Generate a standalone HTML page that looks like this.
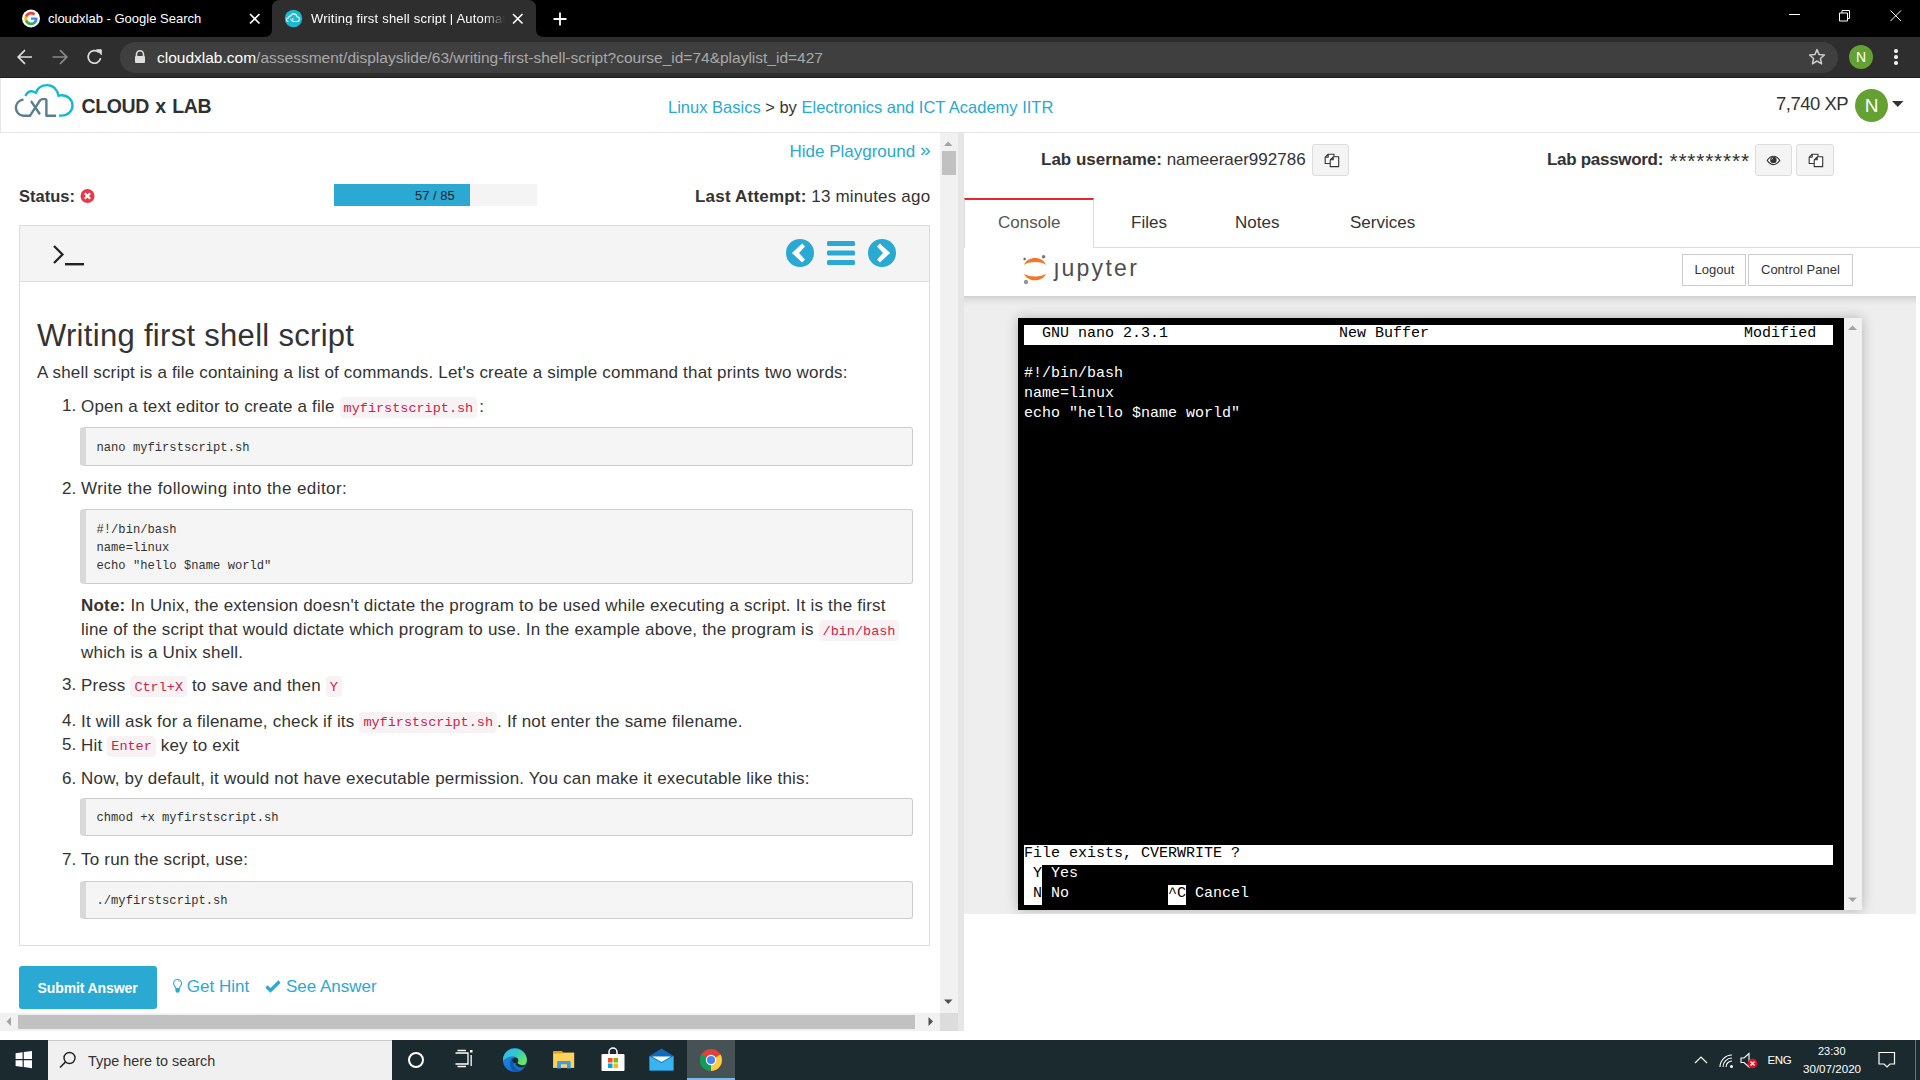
<!DOCTYPE html>
<html><head><meta charset="utf-8">
<style>
*{box-sizing:border-box;margin:0;padding:0}
html,body{width:1920px;height:1080px;overflow:hidden;background:#fff;font-family:"Liberation Sans",sans-serif;color:#333}
.a{position:absolute}
svg{position:absolute;overflow:visible}
.t{position:absolute;white-space:nowrap;line-height:1}
/* chrome */
#tabs{position:absolute;left:0;top:0;width:1920px;height:37px;background:#000}
#toolbar{position:absolute;left:0;top:37px;width:1920px;height:41px;background:#2e2e2e;border-bottom:1px solid #1f1f1f}
#omni{position:absolute;left:120px;top:5px;width:1718px;height:31px;border-radius:16px;background:#3f3f3f}
/* header */
#hdr{position:absolute;left:0;top:78px;width:1920px;height:55px;background:#fff;border-bottom:1px solid #e6e6e6;border-left:1px solid #e6e6e6}
#left{position:absolute;left:0;top:133px;width:940px;height:880px;background:#fff;overflow:hidden}
#right{position:absolute;left:964px;top:133px;width:956px;height:897px;background:#fff;overflow:hidden}
#task{position:absolute;left:0;top:1040px;width:1920px;height:40px;background:#1b2a2f}
</style></head><body>
<!-- TABS -->
<div id="tabs">
  <!-- active tab shape -->
  <svg width="1920" height="37" style="left:0;top:0">
    <path d="M264 37 Q272 37 272 29 L272 8 Q272 0 280 0 L528 0 Q536 0 536 8 L536 29 Q536 37 544 37 Z" fill="#2e2e2e"/>
  </svg>
  <!-- google icon -->
  <svg width="20" height="20" style="left:21px;top:9px" viewBox="0 0 20 20">
    <circle cx="10" cy="9.5" r="9" fill="#fff"/>
    <g transform="translate(3.3 2.8) scale(0.56)">
    <path d="M23.5 12.3c0-.8-.1-1.6-.2-2.3H12v4.4h6.5c-.3 1.5-1.1 2.7-2.4 3.6v3h3.9c2.2-2.1 3.5-5.1 3.5-8.7z" fill="#4285f4"/>
    <path d="M12 24c3.2 0 6-1.1 8-2.9l-3.9-3c-1.1.7-2.5 1.2-4.1 1.2-3.1 0-5.8-2.1-6.7-5H1.3v3.1C3.3 21.3 7.3 24 12 24z" fill="#34a853"/>
    <path d="M5.3 14.3c-.2-.7-.4-1.5-.4-2.3s.1-1.6.4-2.3V6.6H1.3C.5 8.2 0 10.1 0 12s.5 3.8 1.3 5.4z" fill="#fbbc05"/>
    <path d="M12 4.8c1.8 0 3.4.6 4.6 1.8l3.4-3.4C18 1.2 15.2 0 12 0 7.3 0 3.3 2.7 1.3 6.6l4 3.1c.9-2.8 3.6-4.9 6.7-4.9z" fill="#ea4335"/>
    </g>
  </svg>
  <div class="t" style="left:48px;top:12px;font-size:13px;color:#fff">cloudxlab - Google Search</div>
  <svg width="12" height="12" style="left:249px;top:13px"><path d="M1 1L10.5 10.5M10.5 1L1 10.5" stroke="#fff" stroke-width="1.6"/></svg>
  <!-- cloudxlab favicon -->
  <svg width="20" height="20" style="left:284px;top:9px" viewBox="0 0 20 20">
    <circle cx="9.5" cy="9.5" r="8.7" fill="#1fb8d3"/>
    <path d="M4.5 12.5c-1.2 0-2-0.8-2-1.8s.8-1.8 2-1.8c.2-1.3 1.2-2 2.2-2 .5-1.3 1.6-2 2.9-2 1.8 0 3 1.2 3.2 2.8 1.5 0 2.7 1 2.7 2.4s-1.1 2.4-2.7 2.4H11" stroke="#e8f8fb" stroke-width="1.1" fill="none"/>
    <path d="M6.5 9.8l1.5 2.6M8.8 9v3.5h2" stroke="#e8f8fb" stroke-width="1" fill="none"/>
  </svg>
  <div class="t" style="left:311px;top:12px;font-size:13px;color:#fff;width:195px;overflow:hidden;letter-spacing:0.2px;-webkit-mask-image:linear-gradient(to right,#000 172px,transparent 194px)">Writing first shell script | Automation</div>
  <svg width="12" height="12" style="left:512px;top:13px"><path d="M1 1L10.5 10.5M10.5 1L1 10.5" stroke="#fff" stroke-width="1.6"/></svg>
  <svg width="14" height="14" style="left:553px;top:12px"><path d="M7 0.5V13.5M0.5 7H13.5" stroke="#fff" stroke-width="1.8"/></svg>
  <!-- window controls -->
  <svg width="12" height="2" style="left:1789px;top:14px"><path d="M0 0.5H11" stroke="#fff" stroke-width="1"/></svg>
  <svg width="12" height="12" style="left:1839px;top:10px"><path d="M0.5 3H8.5V11H0.5Z M3 3V0.5H10.5V8.5H8.5" stroke="#fff" stroke-width="1" fill="none"/></svg>
  <svg width="12" height="12" style="left:1890px;top:10px"><path d="M0.5 0.5L11 11M11 0.5L0.5 11" stroke="#fff" stroke-width="1"/></svg>
</div>
<!-- TOOLBAR -->
<div id="toolbar">
  <svg width="18" height="18" style="left:16px;top:10.5px" viewBox="0 0 18 18"><path d="M16 9H2.5M9 2.2L2.2 9L9 15.8" stroke="#ddd" stroke-width="1.7" fill="none"/></svg>
  <svg width="18" height="18" style="left:51px;top:10.5px" viewBox="0 0 18 18"><path d="M1.5 9H15.5M9 2.2L15.8 9L9 15.8" stroke="#888" stroke-width="1.7" fill="none"/></svg>
  <svg width="18" height="18" style="left:86px;top:11px" viewBox="0 0 18 18"><path d="M14.6 10.2A6.3 6.3 0 1 1 12.7 4.3" stroke="#ddd" stroke-width="1.7" fill="none"/><path d="M10.5 1.8H15.3V6.6Z" fill="#ddd" stroke="#ddd" stroke-width="1"/></svg>
  <div id="omni">
    <svg width="12" height="14" style="left:14px;top:8px" viewBox="0 0 12 14"><path d="M2.5 6V4.2A3.5 3.5 0 0 1 9.5 4.2V6" stroke="#ddd" stroke-width="1.6" fill="none"/><rect x="1" y="6" width="10" height="7" rx="1" fill="#ddd"/></svg>
    <div class="t" style="left:37px;top:8px;font-size:15.5px;color:#fff">cloudxlab.com<span style="color:#a9a9a9">/assessment/displayslide/63/writing-first-shell-script?course_id=74&amp;playlist_id=427</span></div>
    <svg width="18" height="18" style="left:1688px;top:6px" viewBox="0 0 18 18"><path d="M9 1.6L11.1 6.6L16.4 7L12.4 10.5L13.6 15.8L9 13L4.4 15.8L5.6 10.5L1.6 7L6.9 6.6Z" stroke="#ccc" stroke-width="1.5" fill="none" stroke-linejoin="round"/></svg>
  </div>
  <div class="a" style="left:1849px;top:8px;width:24px;height:24px;border-radius:50%;background:#65a033;color:#fff;font-size:14px;line-height:24px;text-align:center">N</div>
  <div class="a" style="left:1894.3px;top:12.3px;width:3.4px;height:3.4px;border-radius:50%;background:#eee"></div>
  <div class="a" style="left:1894.3px;top:18.3px;width:3.4px;height:3.4px;border-radius:50%;background:#eee"></div>
  <div class="a" style="left:1894.3px;top:24.3px;width:3.4px;height:3.4px;border-radius:50%;background:#eee"></div>
</div>

<!-- HEADER -->
<div id="hdr">
  <svg width="62" height="36" style="left:13px;top:5px" viewBox="0 0 62 36">
    <path d="M11.4 13C12.8 10 15 8.3 17.5 8.3C19 8.3 20.5 9 21.9 9.8C23.5 5 28 2.1 33.2 2.1C39 2.1 43.5 6.5 44.5 12.6C45.5 12.3 46.5 12.2 47.6 12.2C53.5 12.2 58.5 16.8 58.5 22.4C58.5 28 53.5 32.6 47.6 32.6H44.9" stroke="#12bbd3" stroke-width="2.4" fill="none"/>
    <path d="M9.45 16.5C5 17.3 1.9 20.5 1.9 24.6C1.9 29 5 32.7 9.5 32.7H16.1L26.2 17.2C26.8 16.4 27.5 16.1 28.5 16.1H31.2C31.9 16.1 32.4 16.6 32.4 17.3V32.7H42.1" stroke="#5b7d8d" stroke-width="2.4" fill="none" stroke-linejoin="round"/>
    <path d="M17.6 18.8L25.4 30.5" stroke="#5b7d8d" stroke-width="2.4" fill="none" stroke-linecap="round"/>
  </svg>
  <div class="t" style="left:80.5px;top:18.5px;font-size:19.5px;font-weight:bold;color:#2d3136;letter-spacing:-0.4px;word-spacing:1.5px">CLOUD x LAB</div>
  <div class="t" style="left:667px;top:21px;font-size:16.5px;color:#333"><span style="color:#2aa9d1">Linux Basics</span> &gt; by <span style="color:#2aa9d1">Electronics and ICT Academy IITR</span></div>
  <div class="t" style="left:1775px;top:17px;font-size:18.5px;color:#333;letter-spacing:-0.5px">7,740 XP</div>
  <div class="a" style="left:1854px;top:10.5px;width:33px;height:33px;border-radius:50%;background:#65a033;color:#fff;font-size:19px;line-height:33px;text-align:center">N</div>
  <svg width="12" height="7" style="left:1891px;top:23px"><path d="M0 0H11.5L5.75 6Z" fill="#333"/></svg>
</div>
<!-- LEFT PANE -->
<div class="a" style="left:0;top:133px;width:940px;height:880px;background:#fff"></div>
<div class="t" style="left:789.5px;top:140.5px;font-size:17px;color:#2aa9d1">Hide Playground <span style="font-size:19px;position:relative;top:-1px">&raquo;</span></div>
<div class="t" style="left:19px;top:188px;font-size:16.5px;font-weight:bold;color:#333">Status:</div>
<svg width="16" height="16" style="left:80px;top:189px" viewBox="0 0 16 16"><circle cx="7.5" cy="7" r="7" fill="#e8394a"/><path d="M4.8 4.3L10.2 9.7M10.2 4.3L4.8 9.7" stroke="#fff" stroke-width="2.2"/></svg>
<div class="a" style="left:334px;top:184px;width:203px;height:22px;background:#f4f4f4"></div>
<div class="a" style="left:334px;top:184px;width:136px;height:22px;background:#2ca9d2"></div>
<div class="t" style="left:415px;top:188.8px;font-size:13px;color:#222">57 / 85</div>
<div class="t" style="left:695px;top:187.8px;font-size:17px;color:#333"><b style="letter-spacing:0.2px">Last Attempt:</b> <span style="letter-spacing:0.2px">13 minutes ago</span></div>
<!-- content box -->
<div class="a" style="left:19px;top:225px;width:911px;height:721px;border:1px solid #ddd;background:#fff"></div>
<div class="a" style="left:19px;top:225px;width:911px;height:57px;border:1px solid #ddd;background:#f4f4f4"></div>
<svg width="34" height="24" style="left:52px;top:243px" viewBox="0 0 34 24"><path d="M2 3L10.5 11.5L2 20" stroke="#222" stroke-width="2.2" fill="none"/><path d="M13 21.2H32" stroke="#222" stroke-width="2.4"/></svg>
<svg width="30" height="30" style="left:785px;top:238px" viewBox="0 0 30 30"><circle cx="15" cy="15" r="14" fill="#2aa9d2"/><path d="M6.9 15L17.1 5.6L20 8.6L14 15L20 21.4L17.1 24.4Z" fill="#fff"/></svg>
<svg width="30" height="30" style="left:826px;top:238px" viewBox="0 0 30 30"><rect x="1" y="3" width="28" height="5" rx="1.5" fill="#2aa9d2"/><rect x="1" y="12.5" width="28" height="5" rx="1.5" fill="#2aa9d2"/><rect x="1" y="22" width="28" height="5" rx="1.5" fill="#2aa9d2"/></svg>
<svg width="30" height="30" style="left:867px;top:238px" viewBox="0 0 30 30"><circle cx="15" cy="15" r="14" fill="#2aa9d2"/><path d="M23.1 15L12.9 5.6L10 8.6L16 15L10 21.4L12.9 24.4Z" fill="#fff"/></svg>
<style>
.h1{position:absolute;left:37px;white-space:nowrap;font-size:31px;line-height:31px;letter-spacing:0.3px;color:#333}
.ln{position:absolute;left:81px;white-space:nowrap;font-size:17px;line-height:17px;letter-spacing:0.2px;color:#333}
.num{position:absolute;left:62px;white-space:nowrap;font-size:17px;line-height:17px;color:#333}
.ic{display:inline-block;font-family:"Liberation Mono",monospace;font-size:13.5px;line-height:15px;padding:3.5px 4px 2.5px;color:#c7254e;background:#f9f2f4;border-radius:4px;letter-spacing:0}
.cb{position:absolute;left:80px;width:833px;background:#f5f5f5;border:1px solid #ccc;border-left:6px solid #d9d9d9;border-radius:3px}
.cbt{position:absolute;left:96.5px;white-space:pre;font-family:"Liberation Mono",monospace;font-size:12.15px;line-height:18px;color:#333}
</style>
<div class="h1" style="top:319.8px">Writing first shell script</div>
<div class="ln" style="left:37px;top:364.4px;letter-spacing:0.18px">A shell script is a file containing a list of commands. Let's create a simple command that prints two words:</div>
<div class="num" style="top:397.1px">1.</div>
<div class="ln" style="top:397.1px">Open a text editor to create a file <span class="ic">myfirstscript.sh</span><span style="margin-left:2px">:</span></div>
<div class="cb" style="top:427px;height:39px"></div>
<div class="cbt" style="top:438.5px">nano myfirstscript.sh</div>
<div class="num" style="top:479.6px">2.</div>
<div class="ln" style="top:479.6px;letter-spacing:0.42px">Write the following into the editor:</div>
<div class="cb" style="top:509px;height:75px"></div>
<div class="cbt" style="top:520.5px">#!/bin/bash
name=linux
echo "hello $name world"</div>
<div class="ln" style="top:597.1px"><b>Note:</b> In Unix, the extension doesn't dictate the program to be used while executing a script. It is the first</div>
<div class="ln" style="top:620.1px">line of the script that would dictate which program to use. In the example above, the program is <span class="ic">/bin/bash</span></div>
<div class="ln" style="top:643.6px">which is a Unix shell.</div>
<div class="num" style="top:676.3px">3.</div>
<div class="ln" style="top:676.3px">Press <span class="ic">Ctrl+X</span> to save and then <span class="ic">Y</span></div>
<div class="num" style="top:711.6px">4.</div>
<div class="ln" style="top:711.6px">It will ask for a filename, check if its <span class="ic">myfirstscript.sh</span>. If not enter the same filename.</div>
<div class="num" style="top:735.6px">5.</div>
<div class="ln" style="top:735.6px">Hit <span class="ic">Enter</span> key to exit</div>
<div class="num" style="top:769.6px">6.</div>
<div class="ln" style="top:769.6px">Now, by default, it would not have executable permission. You can make it executable like this:</div>
<div class="cb" style="top:798px;height:38px"></div>
<div class="cbt" style="top:809px">chmod +x myfirstscript.sh</div>
<div class="num" style="top:850.6px">7.</div>
<div class="ln" style="top:850.6px">To run the script, use:</div>
<div class="cb" style="top:880.5px;height:38px"></div>
<div class="cbt" style="top:891.5px">./myfirstscript.sh</div>
<!-- bottom buttons -->
<div class="a" style="left:19px;top:966px;width:138px;height:43px;background:#2aa9d2;border-radius:3px"></div>
<div class="t" style="left:37.5px;top:981px;font-size:14px;font-weight:bold;color:#fff;letter-spacing:-0.1px">Submit Answer</div>
<svg width="10" height="15" style="left:172.5px;top:978.5px" viewBox="0 0 10 15"><path d="M2.7 9.2C2.5 7.3 0.6 6.6 0.6 4.5A4 4 0 0 1 8.6 4.5C8.6 6.6 6.7 7.3 6.5 9.2" stroke="#2aa9d2" stroke-width="1.1" fill="none"/><path d="M2.4 9H6.8V11.6A2.2 2.2 0 0 1 2.4 11.6Z" fill="#2aa9d2"/><path d="M5.2 1.9A2.3 2.3 0 0 1 6.8 3" stroke="#2aa9d2" stroke-width="0.7" fill="none"/></svg>
<div class="t" style="left:186.8px;top:977.5px;font-size:17px;color:#2aa9d2">Get Hint</div>
<svg width="16" height="14" style="left:265px;top:979px" viewBox="0 0 16 14"><path d="M1.5 7.5L5.5 11.5L14.5 2.5" stroke="#2aa9d2" stroke-width="3.2" fill="none"/></svg>
<div class="t" style="left:286px;top:977.5px;font-size:17px;color:#2aa9d2">See Answer</div>
<!-- scrollbars -->
<div class="a" style="left:940px;top:133px;width:18px;height:880px;background:#f1f1f1"></div>
<svg width="10" height="6" style="left:944px;top:141px"><path d="M0 5H8.5L4.25 0.5Z" fill="#a3a3a3"/></svg>
<div class="a" style="left:942px;top:151px;width:14px;height:24px;background:#c1c1c1"></div>
<svg width="10" height="6" style="left:944px;top:999px"><path d="M0 0.5H8.5L4.25 5Z" fill="#505050"/></svg>
<div class="a" style="left:0;top:1013px;width:940px;height:18px;background:#f1f1f1"></div>
<div class="a" style="left:18px;top:1015px;width:897px;height:14px;background:#c1c1c1"></div>
<svg width="6" height="10" style="left:6px;top:1017px"><path d="M5 0V9L0.5 4.5Z" fill="#a3a3a3"/></svg>
<svg width="6" height="10" style="left:928px;top:1017px"><path d="M0.5 0V9L5 4.5Z" fill="#505050"/></svg>
<div class="a" style="left:940px;top:1013px;width:18px;height:18px;background:#dcdcdc"></div>
<div class="a" style="left:958px;top:133px;width:6px;height:898px;background:#e6e6e6"></div>


<!-- RIGHT PANE -->
<div class="a" style="left:964px;top:133px;width:956px;height:898px;background:#fff"></div>
<div class="t" style="left:1041px;top:150.6px;font-size:17px;color:#333"><b>Lab username:</b> nameeraer992786</div>
<div class="a" style="left:1312px;top:144px;width:37px;height:32px;background:#f4f4f4;border:1px solid #ddd;border-radius:3px"></div>
<svg width="16" height="15" style="left:1323.5px;top:153px" viewBox="0 0 16 15"><path d="M1.2 4.2L4.2 1.2H10V10.5H1.2Z M1.2 4.2H4.2V1.2" stroke="#333" stroke-width="1.1" fill="#fff" stroke-linejoin="round"/><path d="M6.2 6.8L9.2 3.8H14.7V13.6H6.2Z M6.2 6.8H9.2V3.8" stroke="#333" stroke-width="1.1" fill="#fff" stroke-linejoin="round"/></svg>
<div class="t" style="left:1547px;top:150.6px;font-size:17px;color:#333"><b style="letter-spacing:-0.3px">Lab password:</b></div>
<div class="t" style="left:1669.5px;top:149.5px;font-size:21px;color:#333;letter-spacing:0.75px">*********</div>
<div class="a" style="left:1755px;top:144px;width:37px;height:32px;background:#f4f4f4;border:1px solid #ddd;border-radius:3px"></div>
<svg width="16" height="12" style="left:1766px;top:155px" viewBox="0 0 16 12"><path d="M1.2 5.4C3.2 2.3 5.3 1.2 7.5 1.2S11.8 2.3 13.8 5.4C11.8 8.5 9.7 9.6 7.5 9.6S3.2 8.5 1.2 5.4Z" stroke="#333" stroke-width="1.05" fill="none"/><circle cx="7.4" cy="4.9" r="3.2" fill="#333"/><path d="M5.6 4.6A2 2 0 0 1 7.2 2.9" stroke="#f4f4f4" stroke-width="0.8" fill="none"/></svg>
<div class="a" style="left:1796px;top:144px;width:38px;height:32px;background:#f4f4f4;border:1px solid #ddd;border-radius:3px"></div>
<svg width="16" height="15" style="left:1807.5px;top:153px" viewBox="0 0 16 15"><path d="M1.2 4.2L4.2 1.2H10V10.5H1.2Z M1.2 4.2H4.2V1.2" stroke="#333" stroke-width="1.1" fill="#fff" stroke-linejoin="round"/><path d="M6.2 6.8L9.2 3.8H14.7V13.6H6.2Z M6.2 6.8H9.2V3.8" stroke="#333" stroke-width="1.1" fill="#fff" stroke-linejoin="round"/></svg>
<!-- tabs -->
<div class="a" style="left:964px;top:246.5px;width:956px;height:1px;background:#ddd"></div>
<div class="a" style="left:964px;top:198px;width:130px;height:50px;background:#fff;border-left:1px solid #ddd;border-right:1px solid #ddd;border-top:2px solid #e8262f"></div>
<div class="t" style="left:998px;top:213.6px;font-size:17px;color:#555">Console</div>
<div class="t" style="left:1131px;top:213.6px;font-size:17px;color:#333">Files</div>
<div class="t" style="left:1235px;top:213.6px;font-size:17px;color:#333">Notes</div>
<div class="t" style="left:1350px;top:213.6px;font-size:17px;color:#333">Services</div>
<!-- jupyter header -->
<svg width="26" height="30" style="left:1022px;top:255px" viewBox="0 0 26 30">
  <path d="M2 10C5 0.5 21 0.5 24 10C20 6 6 6 2 10Z" fill="#f37726"/>
  <path d="M2 18.4C5 27.5 21 27.5 24 18.4C20 22.4 6 22.4 2 18.4Z" fill="#f37726"/>
  <circle cx="21.6" cy="1.8" r="1.8" fill="#767677"/>
  <circle cx="2.6" cy="4" r="1.2" fill="#616262"/>
  <circle cx="4" cy="27" r="2.2" fill="#989798"/>
</svg>
<div class="t" style="left:1054px;top:256.8px;font-size:23px;color:#4e4e4e;letter-spacing:2.3px">&#x237;upyter</div>
<div class="a" style="left:1682px;top:254px;width:64px;height:32px;border:1px solid #ccc;background:#fff"></div>
<div class="t" style="left:1694.5px;top:262.8px;font-size:13px;color:#333">Logout</div>
<div class="a" style="left:1748px;top:254px;width:105px;height:32px;border:1px solid #ccc;background:#fff"></div>
<div class="t" style="left:1761px;top:262.8px;font-size:13px;color:#333">Control Panel</div>
<!-- gray area -->
<div class="a" style="left:964px;top:296px;width:952px;height:618px;background:#eee;overflow:hidden">
  <div class="a" style="left:-20px;top:-10px;width:1000px;height:10px;box-shadow:0 2px 8px rgba(0,0,0,0.18)"></div>
</div>
<div class="a" style="left:1018px;top:318px;width:844px;height:592px;background:#000;box-shadow:0 0 12px rgba(0,0,0,0.25)"></div>
<div class="a" style="left:1844px;top:318px;width:18px;height:592px;background:#f1f1f1"></div>
<svg width="10" height="6" style="left:1848px;top:325px"><path d="M0 5H9L4.5 0.5Z" fill="#a3a3a3"/></svg>
<svg width="10" height="6" style="left:1848px;top:897px"><path d="M0 0.5H9L4.5 5Z" fill="#a3a3a3"/></svg>
<div class="a" style="left:964px;top:914px;width:956px;height:117px;background:#fff"></div>
<style>
.tr{position:absolute;left:1024px;white-space:pre;font-family:"Liberation Mono",monospace;font-size:15px;line-height:18px;height:20px;color:#fff}
.inv{background:#fff;color:#000;display:inline-block;height:20px;vertical-align:top}
</style>
<div class="tr inv" style="top:325px;width:809px">  GNU nano 2.3.1                   New Buffer                                   Modified  </div>
<div class="tr" style="top:365px">#!/bin/bash</div>
<div class="tr" style="top:385px">name=linux</div>
<div class="tr" style="top:405px">echo "hello $name world"</div>
<div class="tr inv" style="top:844.5px;width:809px">File exists, CVERWRITE ?</div>
<div class="tr" style="top:864.5px"><span class="inv"> Y</span> Yes</div>
<div class="tr" style="top:884.5px"><span class="inv"> N</span> No           <span class="inv">^C</span> Cancel</div>
<!-- TASKBAR -->
<div id="task">
  <svg width="18" height="18" style="left:15px;top:11px" viewBox="0 0 18 18"><path d="M0.6 2.2L7.6 1.2V8H0.6Z M8.8 1.1L17 0V8H8.8Z M0.6 9.2H7.6V16L0.6 15Z M8.8 9.2H17V17.2L8.8 16.1Z" fill="#fff"/></svg>
  <div class="a" style="left:48px;top:0;width:344px;height:40px;background:#f0f0f0;border-top:1px solid #c9c9c9"></div>
  <svg width="18" height="18" style="left:59px;top:11px" viewBox="0 0 18 18"><circle cx="10.5" cy="7" r="5.5" stroke="#222" stroke-width="1.4" fill="none"/><path d="M6.6 10.9L1 16.5" stroke="#222" stroke-width="1.5"/></svg>
  <div class="t" style="left:88px;top:13.5px;font-size:14.4px;color:#333">Type here to search</div>
  <svg width="20" height="20" style="left:406px;top:10px" viewBox="0 0 20 20"><circle cx="10" cy="10" r="7" stroke="#fff" stroke-width="2" fill="none"/></svg>
  <svg width="20" height="20" style="left:455px;top:9px" viewBox="0 0 20 20"><path d="M0.5 4H13V15H0.5M2.5 1.5H11M2.5 17.5H11" stroke="#fff" stroke-width="1.3" fill="none"/><rect x="15" y="1" width="2.5" height="2.5" fill="#fff"/><rect x="15.5" y="6" width="1.3" height="11" fill="#fff"/></svg>
  <!-- edge -->
  <svg width="26" height="26" style="left:502px;top:7px" viewBox="0 0 26 26">
    <defs>
      <linearGradient id="eg1" x1="0" y1="0" x2="1" y2="0.6"><stop offset="0" stop-color="#36b9f0"/><stop offset="0.55" stop-color="#35c9c0"/><stop offset="1" stop-color="#6be85a"/></linearGradient>
      <linearGradient id="eg2" x1="0" y1="0" x2="0.3" y2="1"><stop offset="0" stop-color="#1e90e0"/><stop offset="1" stop-color="#1572d4"/></linearGradient>
    </defs>
    <circle cx="12.9" cy="12.9" r="12" fill="url(#eg2)"/>
    <path d="M1 12.3A12 12 0 0 1 24.9 13.2C24.7 15 24 16.5 23.3 17.6C21 19.2 17.5 18.6 15.5 16.6C17 14.5 16.5 11.5 14 10.2C10.5 8.3 5 9.5 1.5 13.5Z" fill="url(#eg1)"/>
    <path d="M9.8 11.5C6.8 15.5 7.5 21.5 12 24.2C14 25 16.5 25 19 24C14.5 23 11.5 19.5 11.2 15.5C11 13.5 11.8 11.8 13 10.6Z" fill="#1058b0"/>
    <circle cx="13.3" cy="13.3" r="2.9" fill="#1b2a2f"/>
    <path d="M14.8 15.6C17.5 18.3 21 19 23.6 17.3L22.6 19.4C19.5 21.3 16 20.5 13.5 17.5Z" fill="#1b2a2f"/>
  </svg>
  <!-- explorer -->
  <svg width="24" height="20" style="left:552px;top:10px" viewBox="0 0 24 20"><rect x="1.1" y="2.6" width="21.1" height="15.3" fill="#ffd35b"/><path d="M1.1 1H10L10.9 1.9V3.6H1.1Z" fill="#e7a30a"/><path d="M5.1 18.6V12.3Q5.1 11.1 6.3 11.1H17.5Q18.7 11.1 18.7 12.3V18.6H15V14.2H8.9V18.6Z" fill="#3f9ae8"/></svg>
  <!-- store -->
  <svg width="24" height="24" style="left:601px;top:8px" viewBox="0 0 24 24"><path d="M8 6V4A4 4 0 0 1 16 4V6" stroke="#fff" stroke-width="1.5" fill="none"/><rect x="0.5" y="6" width="23" height="17" rx="1" fill="#fff"/><rect x="7" y="10" width="4.5" height="4.5" fill="#f25022"/><rect x="12.5" y="10" width="4.5" height="4.5" fill="#7fba00"/><rect x="7" y="15.5" width="4.5" height="4.5" fill="#00a4ef"/><rect x="12.5" y="15.5" width="4.5" height="4.5" fill="#ffb900"/></svg>
  <!-- mail -->
  <svg width="26" height="24" style="left:649px;top:8px" viewBox="0 0 26 24"><path d="M0.5 8L12.5 0.5L24.5 8V22.5H0.5Z" fill="#0f6cbd"/><path d="M0.5 8L12.5 15L24.5 8V22.5H0.5Z" fill="#38b5f0"/><path d="M3 8.5H22L12.5 14Z" fill="#fff"/></svg>
  <!-- chrome -->
  <div class="a" style="left:687px;top:0;width:48px;height:40px;background:#475255"></div>
  <div class="a" style="left:687px;top:38px;width:48px;height:2px;background:#76b9ed"></div>
  <svg width="24" height="24" style="left:699px;top:8px" viewBox="0 0 24 24">
    <circle cx="12" cy="12" r="11" fill="#db4437"/>
    <path d="M12 12L2.5 6.5A11 11 0 0 0 12 23Z" fill="#0f9d58"/>
    <path d="M12 12L21.5 6.5A11 11 0 0 1 12 23Z" fill="#ffcd40"/>
    <path d="M12 12L2.47 6.5 A11 11 0 0 0 7.2 21.9Z" fill="#0f9d58"/>
    <circle cx="12" cy="12" r="5.2" fill="#fff"/>
    <circle cx="12" cy="12" r="4.1" fill="#4285f4"/>
  </svg>
  <!-- tray -->
  <svg width="14" height="8" style="left:1694px;top:16px" viewBox="0 0 14 8"><path d="M1 7L7 1L13 7" stroke="#fff" stroke-width="1.2" fill="none"/></svg>
  <svg width="16" height="14" style="left:1719px;top:14px" viewBox="0 0 16 14"><path d="M1 13A12 12 0 0 1 13 1M4 13A9 9 0 0 1 13 4M7 13A6 6 0 0 1 13 7" stroke="#fff" stroke-width="1.1" fill="none"/><circle cx="12.5" cy="12.5" r="1.5" fill="#fff"/></svg>
  <svg width="20" height="18" style="left:1740px;top:12px" viewBox="0 0 20 18"><path d="M1 6H4L9 1.5V15L4 10.5H1Z" stroke="#fff" stroke-width="1.1" fill="none"/><circle cx="12.5" cy="11.5" r="4.8" fill="#e81123"/><path d="M10.5 9.5L14.5 13.5M14.5 9.5L10.5 13.5" stroke="#fff" stroke-width="1.2"/></svg>
  <div class="t" style="left:1767.5px;top:15px;font-size:11.5px;color:#fff;letter-spacing:-0.4px">ENG</div>
  <div class="t" style="left:1818px;top:5.5px;font-size:11px;color:#fff">23:30</div>
  <div class="t" style="left:1803px;top:22.5px;font-size:11.6px;color:#fff">30/07/2020</div>
  <svg width="18" height="18" style="left:1878px;top:11px" viewBox="0 0 18 18"><path d="M1 1.5H16.5V13H12L9 16L6 13H1Z" stroke="#fff" stroke-width="1.2" fill="none"/></svg>
  <div class="a" style="left:1915px;top:0;width:1px;height:40px;background:#6a7479"></div>
</div>

</body></html>
